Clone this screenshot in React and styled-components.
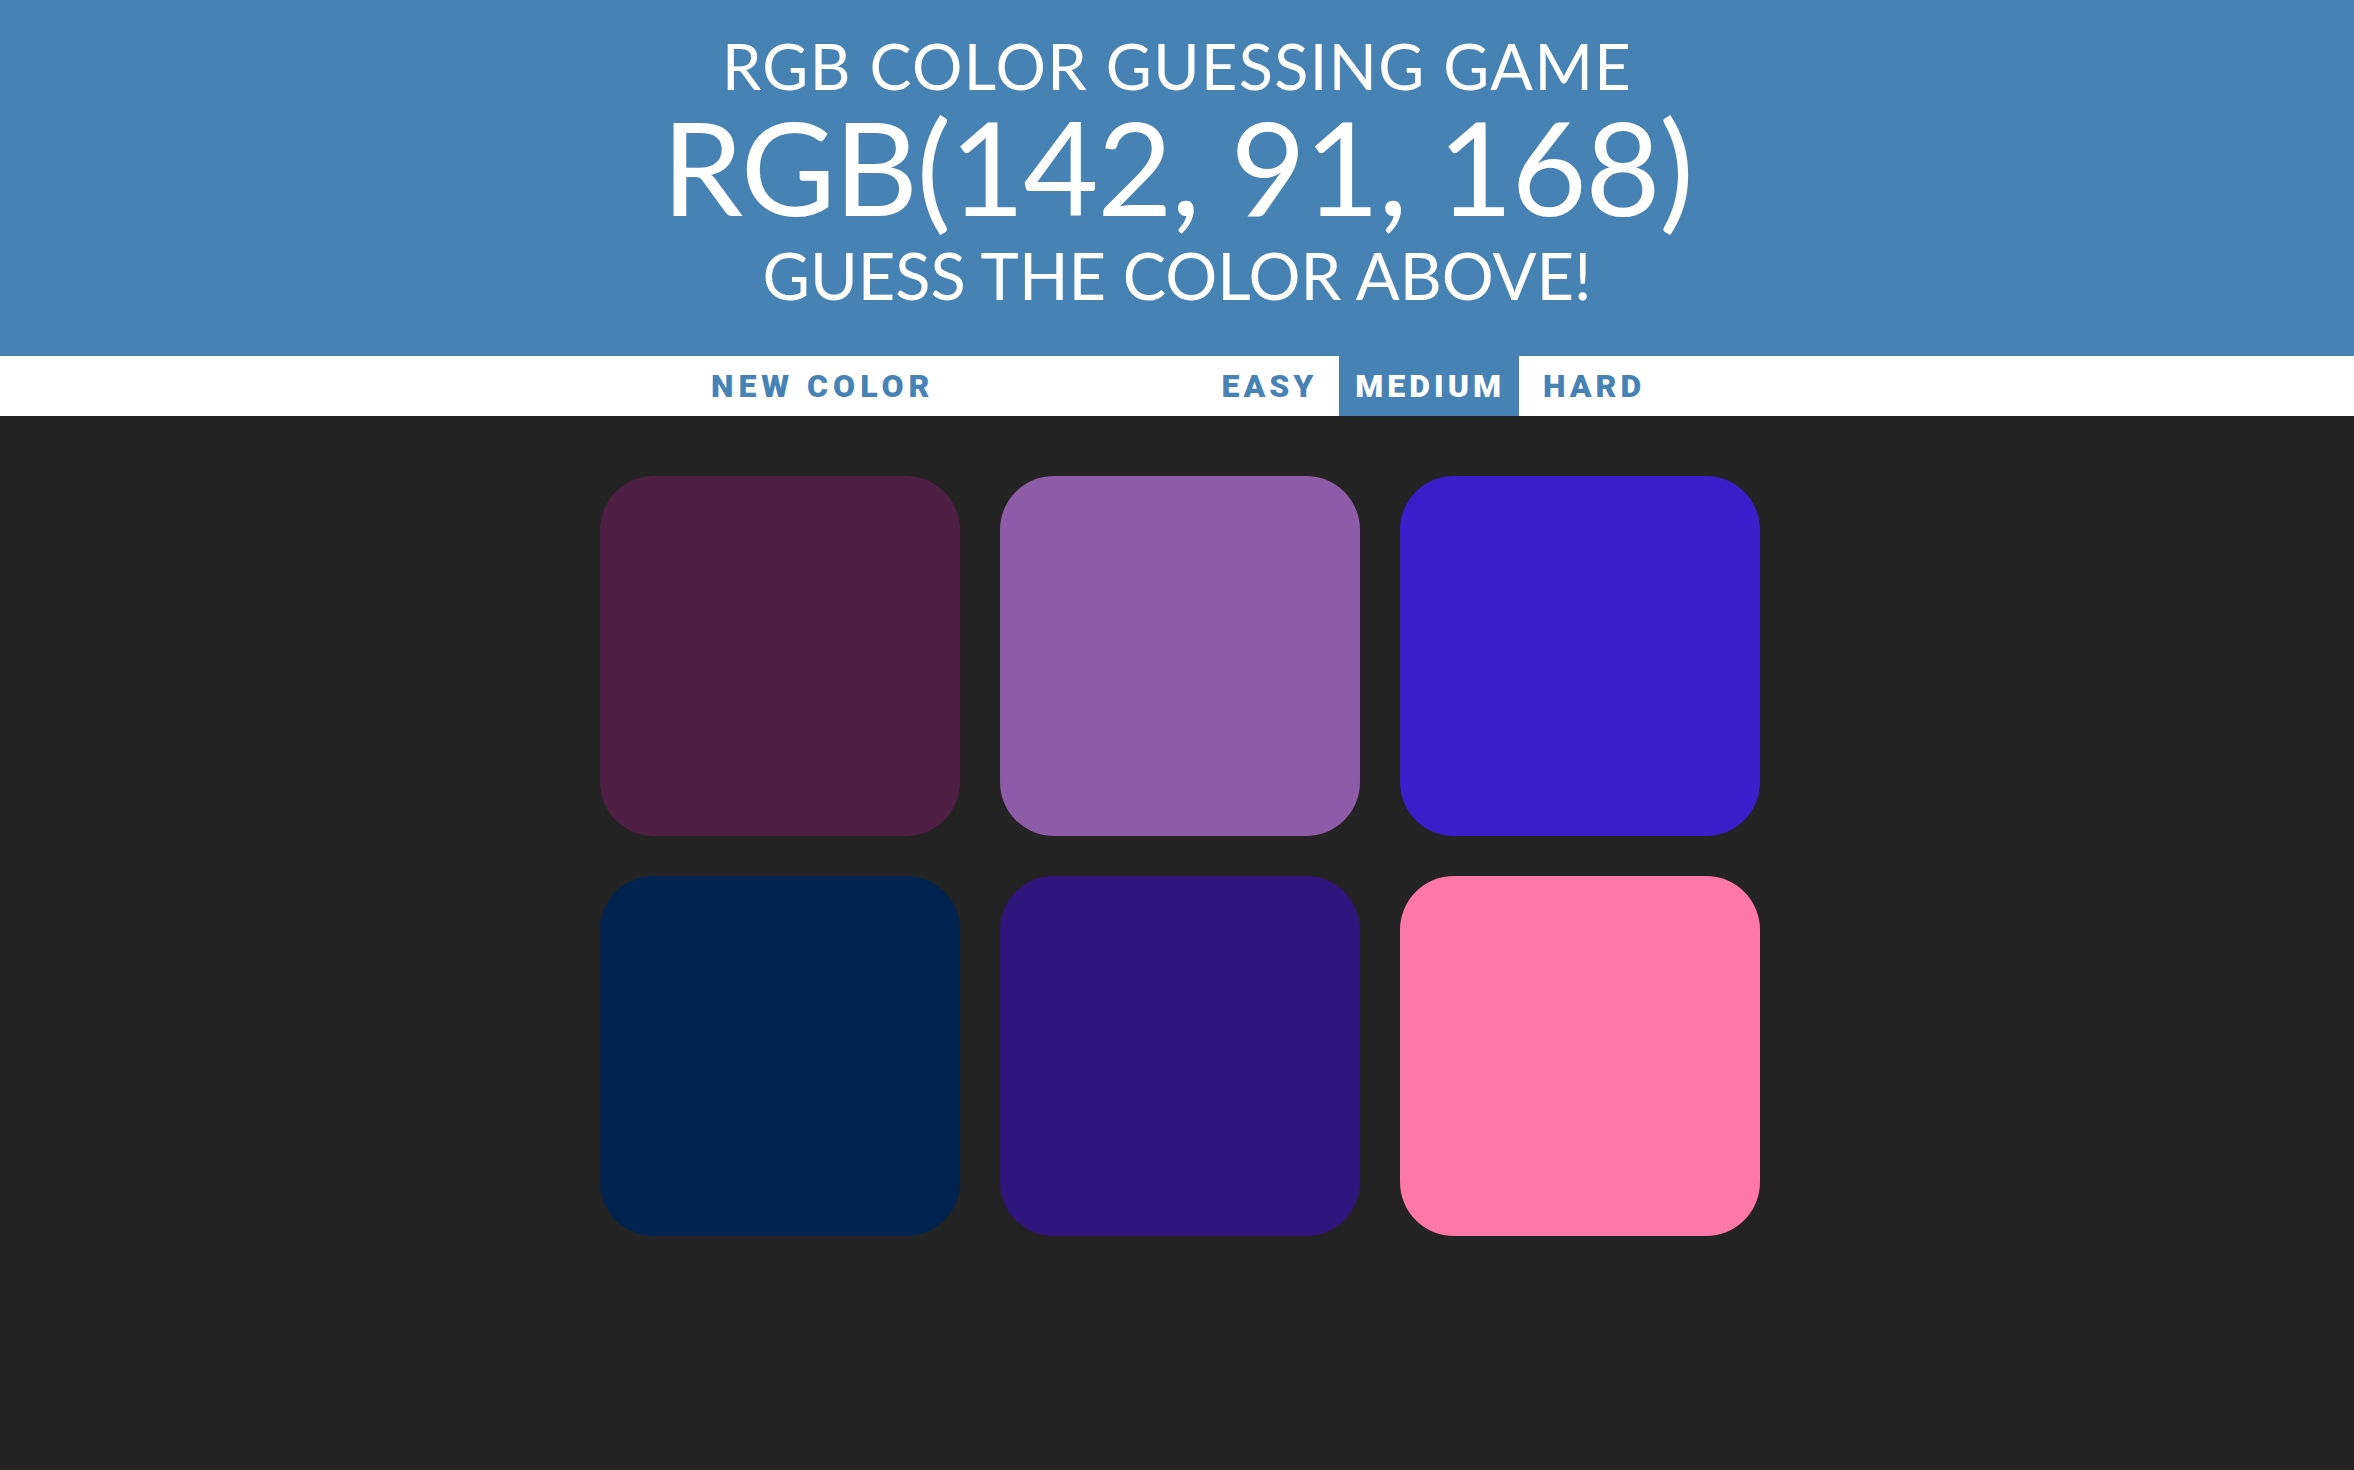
import React, { useState } from "react";
import styled, { createGlobalStyle } from "styled-components";

const GlobalStyle = createGlobalStyle`
  html, body {
    margin: 0;
    padding: 0;
    background: #232323;
  }
  body {
    font-family: "Lato", "Open Sans", sans-serif;
  }
`;

const colors = [
  "rgb(78, 31, 67)",
  "rgb(142, 91, 168)",
  "rgb(58, 30, 203)",
  "rgb(0, 35, 80)",
  "rgb(48, 20, 125)",
  "rgb(253, 120, 166)",
];

const modes = ["easy", "medium", "hard"];

const App = () => {
  const [mode, setMode] = useState("medium");

  return (
    <Page>
      <GlobalStyle />
      <Header>
        <Title>RGB Color Guessing Game</Title>
        <ColorDisplay>RGB(142, 91, 168)</ColorDisplay>
        <Subtitle>Guess the color above!</Subtitle>
      </Header>
      <Stripe>
        <StripeButton spacing={5}>New Color</StripeButton>
        <Message />
        {modes.map((m) => (
          <StripeButton key={m} selected={m === mode} onClick={() => setMode(m)}>
            {m}
          </StripeButton>
        ))}
      </Stripe>
      <Board>
        {colors.map((c) => (
          <Square key={c} style={{ background: c }} />
        ))}
      </Board>
    </Page>
  );
};

export default App;

const Page = styled.div`
  min-height: 100vh;
  background: #232323;
`;

const Header = styled.header`
  background: steelblue;
  color: white;
  text-align: center;
  text-transform: uppercase;
  padding: 34px 0 48px;
`;

const Title = styled.h1`
  margin: 0;
  font-size: 63px;
  font-weight: 400;
  line-height: 63px;
  letter-spacing: 1.4px;
`;

const ColorDisplay = styled.div`
  margin-top: 4px;
  font-size: 130px;
  font-weight: 400;
  line-height: 130px;
  letter-spacing: -1.6px;
`;

const Subtitle = styled.h2`
  margin: 12px 0 0;
  font-size: 65px;
  font-weight: 400;
  line-height: 65px;
`;

const Stripe = styled.nav`
  display: flex;
  justify-content: center;
  gap: 8px;
  height: 60px;
  background: white;
`;

const StripeButton = styled.button`
  border: none;
  outline: none;
  padding: 0 14px 0 16px;
  height: 100%;
  font-family: "Roboto", "Liberation Sans", sans-serif;
  font-size: 32px;
  font-weight: 900;
  letter-spacing: ${(p) => p.spacing || 4}px;
  text-transform: uppercase;
  cursor: pointer;
  color: ${(p) => (p.selected ? "white" : "steelblue")};
  background: ${(p) => (p.selected ? "steelblue" : "white")};
`;

const Message = styled.span`
  width: 241px;
`;

const Board = styled.main`
  display: grid;
  grid-template-columns: repeat(3, 360px);
  gap: 40px;
  justify-content: center;
  padding: 60px 0 0 6px;
`;

const Square = styled.div`
  width: 360px;
  height: 360px;
  border-radius: 15%;
`;
